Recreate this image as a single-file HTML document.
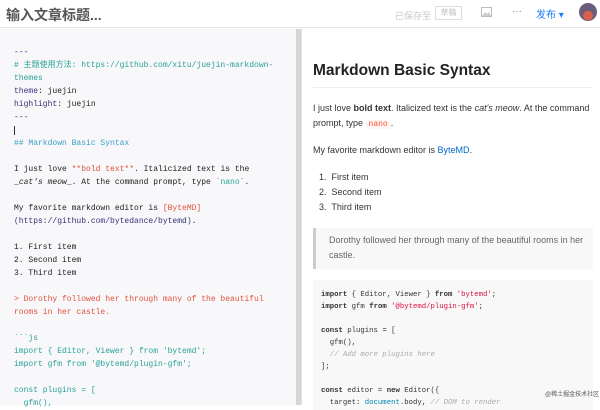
<!DOCTYPE html>
<html><head><meta charset="utf-8"><style>
*{margin:0;padding:0;box-sizing:border-box}
body{width:600px;height:405px;overflow:hidden;background:#fff;font-family:"Liberation Sans","Noto Sans CJK SC",sans-serif;position:relative}
.hd{position:absolute;left:0;top:0;width:600px;height:28px;border-bottom:1px solid #e6e6e6;background:#fff}
.ttl{position:absolute;left:6px;top:5px;font-size:14px;font-weight:bold;color:#555}
.sv{position:absolute;left:395px;top:9px;font-size:9px;color:#c8c8c8}
.dr{position:absolute;left:435px;top:6px;width:27px;height:14px;border:1px solid #ddd;font-size:8px;color:#c0c0c0;text-align:center;line-height:12px}
.dots{position:absolute;left:512px;top:6px;font-size:10px;color:#888}
.pub{position:absolute;left:536px;top:6px;font-size:10px;color:#1d7dfa}
.av{position:absolute;left:579px;top:3px;width:18px;height:18px;border-radius:50%;background:radial-gradient(circle at 50% 70%,#d9604a 0 30%,#6a5d7a 32%)}
.left{position:absolute;left:0;top:29px;width:296px;height:376px;background:#f8f8fa}
.sb{position:absolute;left:296px;top:29px;width:5px;height:376px;background:#d6d6d6}
.rb{position:absolute;left:301px;top:29px;width:1px;height:376px;background:#e0e0e0}
.code{position:absolute;left:14px;top:46px;font-family:"Liberation Mono","Noto Sans CJK SC",monospace;font-size:8px;line-height:13px;color:#222;white-space:pre}
.t{color:#2aa198}.r{color:#e0533d}.b{color:#3a9fc9}.k{color:#36327a}
h1{position:absolute;left:313px;top:62px;font-size:15.5px;font-weight:bold;color:#222}
.hr{position:absolute;left:313px;top:87px;width:280px;height:1px;background:#eee}
.p{position:absolute;left:313px;font-size:9px;line-height:15px;color:#333;width:284px}
.nano{background:#fff5f5;color:#ff502c;font-family:"Liberation Mono",monospace;font-size:8px;padding:0 3px}
.a{color:#0269c8}
.bq{position:absolute;left:313px;top:228px;width:280px;height:41px;background:#f8f8f8;border-left:3px solid #ccc;padding:5px 0 0 13px;font-size:9px;line-height:15px;color:#666}
.pre{position:absolute;left:313px;top:280px;width:280px;height:130px;background:#f8f8f8;padding:9px 0 0 8px;font-family:"Liberation Mono",monospace;font-size:7.3px;line-height:12px;color:#333;white-space:pre}
.kw{font-weight:bold;color:#333}.s{color:#d14}.c{color:#aaa;font-style:italic}.bl{color:#0086b3}
.wm{position:absolute;left:545px;top:389px;font-size:6px;color:#555;white-space:nowrap}
</style></head><body>
<div class="hd">
<div class="ttl">输入文章标题...</div>
<div class="sv">已保存至</div><div class="dr">草稿</div>
<svg style="position:absolute;left:481px;top:7px" width="11" height="10"><rect x="0.5" y="0.5" width="10" height="9" fill="none" stroke="#bbb"/><path d="M1 9 L4 5 L6 7 L8 5 L10 9Z" fill="#ccc"/></svg>
<div class="dots">···</div>
<div class="pub">发布 ▾</div>
<div class="av"></div>
</div>
<div class="left"></div><div class="sb"></div><div class="rb"></div>
<div class="code"><span class="k">---</span>
<span class="t"># 主题使用方法: https://github.com/xitu/juejin-markdown-
themes</span>
<span class="k">theme</span>: juejin
<span class="k">highlight</span>: juejin
<span class="k">---</span>
<span style="border-left:1px solid #333"> </span>
<span class="b">## Markdown Basic Syntax</span>

I just love <span class="r">**bold text**</span>. Italicized text is the
_<i>cat's meow</i>_. At the command prompt, type <span class="t">&#96;nano&#96;</span>.

My favorite markdown editor is <span class="r">[ByteMD]</span>
<span class="k">(https://github.com/bytedance/bytemd)</span>.

1. First item
2. Second item
3. Third item

<span class="r">&gt; Dorothy followed her through many of the beautiful
rooms in her castle.</span>

<span class="t">&#96;&#96;&#96;js
import { Editor, Viewer } from 'bytemd';
import gfm from '@bytemd/plugin-gfm';

const plugins = [
  gfm(),</span></div>
<h1>Markdown Basic Syntax</h1>
<div class="hr"></div>
<div class="p" style="top:101px">I just love <b>bold text</b>. Italicized text is the <i>cat's meow</i>. At the command prompt, type <span class="nano">nano</span>.</div>
<div class="p" style="top:143px">My favorite markdown editor is <span class="a">ByteMD</span>.</div>
<div class="p" style="top:170px;left:319px">1.&nbsp; First item<br>2.&nbsp; Second item<br>3.&nbsp; Third item</div>
<div class="bq">Dorothy followed her through many of the beautiful rooms in her castle.</div>
<div class="pre"><span class="kw">import</span> { Editor, Viewer } <span class="kw">from</span> <span class="s">'bytemd'</span>;
<span class="kw">import</span> gfm <span class="kw">from</span> <span class="s">'@bytemd/plugin-gfm'</span>;

<span class="kw">const</span> plugins = [
  gfm(),
  <span class="c">// Add more plugins here</span>
];

<span class="kw">const</span> editor = <span class="kw">new</span> Editor({
  target: <span class="bl">document</span>.body, <span class="c">// DOM to render</span></div>
<div class="wm">@稀土掘金技术社区</div>
</body></html>
